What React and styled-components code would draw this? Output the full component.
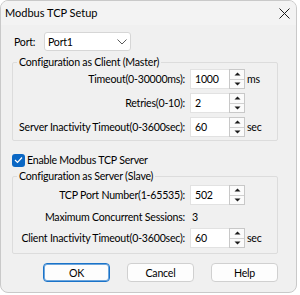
import React from "react";
import styled, { createGlobalStyle } from "styled-components";

const Global = createGlobalStyle`
  html, body { margin: 0; padding: 0; background: #ffffff; }
  body {
    font-family: Lato, "Noto Sans", sans-serif;
    font-size: 10.6px;
    letter-spacing: -0.22px;
    color: #000000;
  }
  * { box-sizing: border-box; }
`;

const Window = styled.div`
  width: 297px;
  height: 293px;
  background: #f0f0f0;
  border: 1px solid #c9c9c9;
  border-radius: 8px;
  overflow: hidden;
  display: flex;
  flex-direction: column;
`;

const TitleBar = styled.div`
  height: 24px;
  display: flex;
  align-items: center;
  justify-content: space-between;
  padding: 0 5px 0 4px;
  background: #f3f3f3;
`;

const Title = styled.span`
  font-size: 11px;
  letter-spacing: 0;
  line-height: 16px;
`;

const CloseBtn = styled.span`
  width: 14px;
  height: 14px;
  display: flex;
  align-items: center;
  justify-content: center;
`;

const Body = styled.div`
  display: flex;
  flex-direction: column;
`;

const PortRow = styled.div`
  margin-top: 7px;
  height: 19px;
  display: flex;
  align-items: center;
  padding-left: 13px;
`;

const PortLabel = styled.span`
  width: 30px;
`;

const Combo = styled.div`
  width: 87px;
  height: 19px;
  background: #ffffff;
  border: 1px solid #d6d6d6;
  border-radius: 3px;
  display: flex;
  align-items: center;
  justify-content: space-between;
  padding: 0 3px 0 3px;
`;

const Group = styled.fieldset`
  margin: ${(p) => p.$top}px 0 0 11px;
  width: 266px;
  border: 1px solid #dcdcdc;
  border-radius: 2px;
  padding: ${(p) => p.$pt}px 0 ${(p) => p.$pb}px 0;
  min-width: 0;
`;

const Legend = styled.legend`
  margin-left: 4px;
  padding: 0 2px;
  line-height: 14px;
`;

const Rows = styled.div`
  display: flex;
  flex-direction: column;
  gap: ${(p) => p.$gap}px;
`;

const Row = styled.div`
  display: grid;
  grid-template-columns: 177px 55px 1fr;
  align-items: center;
  height: ${(p) => p.$h || 20}px;
`;

const Label = styled.span`
  text-align: right;
  padding-right: 5px;
  white-space: nowrap;
`;

const Value = styled.span`
  padding-left: 2px;
`;

const Unit = styled.span`
  padding-left: 2px;
`;

const SpinBox = styled.div`
  display: flex;
  height: 20px;
`;

const Edit = styled.div`
  flex: 1;
  background: #ffffff;
  border: 1px solid #e2e2e2;
  border-right: none;
  display: flex;
  align-items: center;
  padding-left: 4px;
`;

const Spinner = styled.div`
  width: 16px;
  display: flex;
  flex-direction: column;
  border: 1px solid #c8c8c8;
  background: #f4f4f4;
`;

const SpinHalf = styled.div`
  flex: 1;
  display: flex;
  align-items: center;
  justify-content: center;
  background: #fbfbfb;
  border-top: ${(p) => (p.$bottom ? "1px solid #d0d0d0" : "none")};
`;

const CheckRow = styled.label`
  margin-top: 12px;
  height: 14px;
  display: flex;
  align-items: center;
  padding-left: 11px;
  gap: 2px;
`;

const CheckBox = styled.span`
  width: 13px;
  height: 13px;
  border-radius: 3px;
  background: #0a67c4;
  display: flex;
  align-items: center;
  justify-content: center;
`;

const Buttons = styled.div`
  margin-top: 9px;
  padding-left: 42px;
  display: flex;
  gap: 17px;
`;

const Button = styled.button`
  width: 67px;
  height: 19px;
  padding: 0;
  font-family: inherit;
  font-size: inherit;
  letter-spacing: inherit;
  color: #000000;
  background: #fdfdfd;
  border: 1px solid ${(p) => (p.$primary ? "#1a73c9" : "#d0d0d0")};
  box-shadow: ${(p) => (p.$primary ? "inset 0 0 0 1px #6ea6dc" : "none")};
  border-radius: 4px;
`;

const Tri = ({ down }) => (
  <svg width="7" height="4" viewBox="0 0 7 4">
    <path d={down ? "M0.5 0.5 L6.5 0.5 L3.5 3.5 Z" : "M0.5 3.5 L6.5 3.5 L3.5 0.5 Z"} fill="#1a1a1a" />
  </svg>
);

const Spin = ({ value }) => (
  <SpinBox>
    <Edit>{value}</Edit>
    <Spinner>
      <SpinHalf>
        <Tri />
      </SpinHalf>
      <SpinHalf $bottom>
        <Tri down />
      </SpinHalf>
    </Spinner>
  </SpinBox>
);

export default function App() {
  return (
    <>
      <Global />
      <Window>
        <TitleBar>
          <Title>Modbus TCP Setup</Title>
          <CloseBtn>
            <svg width="11" height="11" viewBox="0 0 11 11">
              <path d="M0.5 0.5 L10.5 10.5 M10.5 0.5 L0.5 10.5" stroke="#1a1a1a" strokeWidth="1" />
            </svg>
          </CloseBtn>
        </TitleBar>
        <Body>
          <PortRow>
            <PortLabel>Port:</PortLabel>
            <Combo>
              <span>Port1</span>
              <svg width="10" height="6" viewBox="0 0 10 6">
                <path d="M0.5 0.5 L5 5 L9.5 0.5" stroke="#5a5a5a" strokeWidth="1" fill="none" />
              </svg>
            </Combo>
          </PortRow>

          <Group $top={4} $pt={0} $pb={3}>
            <Legend>Configuration as Client (Master)</Legend>
            <Rows $gap={4}>
              <Row>
                <Label>Timeout(0-30000ms):</Label>
                <Spin value="1000" />
                <Unit>ms</Unit>
              </Row>
              <Row>
                <Label>Retries(0-10):</Label>
                <Spin value="2" />
                <Unit />
              </Row>
              <Row>
                <Label>Server Inactivity Timeout(0-3600sec):</Label>
                <Spin value="60" />
                <Unit>sec</Unit>
              </Row>
            </Rows>
          </Group>

          <CheckRow>
            <CheckBox>
              <svg width="9" height="8" viewBox="0 0 9 8">
                <path d="M1 4 L3.5 6.5 L8 1.5" stroke="#ffffff" strokeWidth="1.2" fill="none" />
              </svg>
            </CheckBox>
            <span>Enable Modbus TCP Server</span>
          </CheckRow>

          <Group $top={2} $pt={2} $pb={5}>
            <Legend>Configuration as Server (Slave)</Legend>
            <Rows $gap={2}>
              <Row>
                <Label>TCP Port Number(1-65535):</Label>
                <Spin value="502" />
                <Unit />
              </Row>
              <Row $h={19}>
                <Label>Maximum Concurrent Sessions:</Label>
                <Value>3</Value>
                <Unit />
              </Row>
              <Row>
                <Label>Client Inactivity Timeout(0-3600sec):</Label>
                <Spin value="60" />
                <Unit>sec</Unit>
              </Row>
            </Rows>
          </Group>

          <Buttons>
            <Button $primary>OK</Button>
            <Button>Cancel</Button>
            <Button>Help</Button>
          </Buttons>
        </Body>
      </Window>
    </>
  );
}
